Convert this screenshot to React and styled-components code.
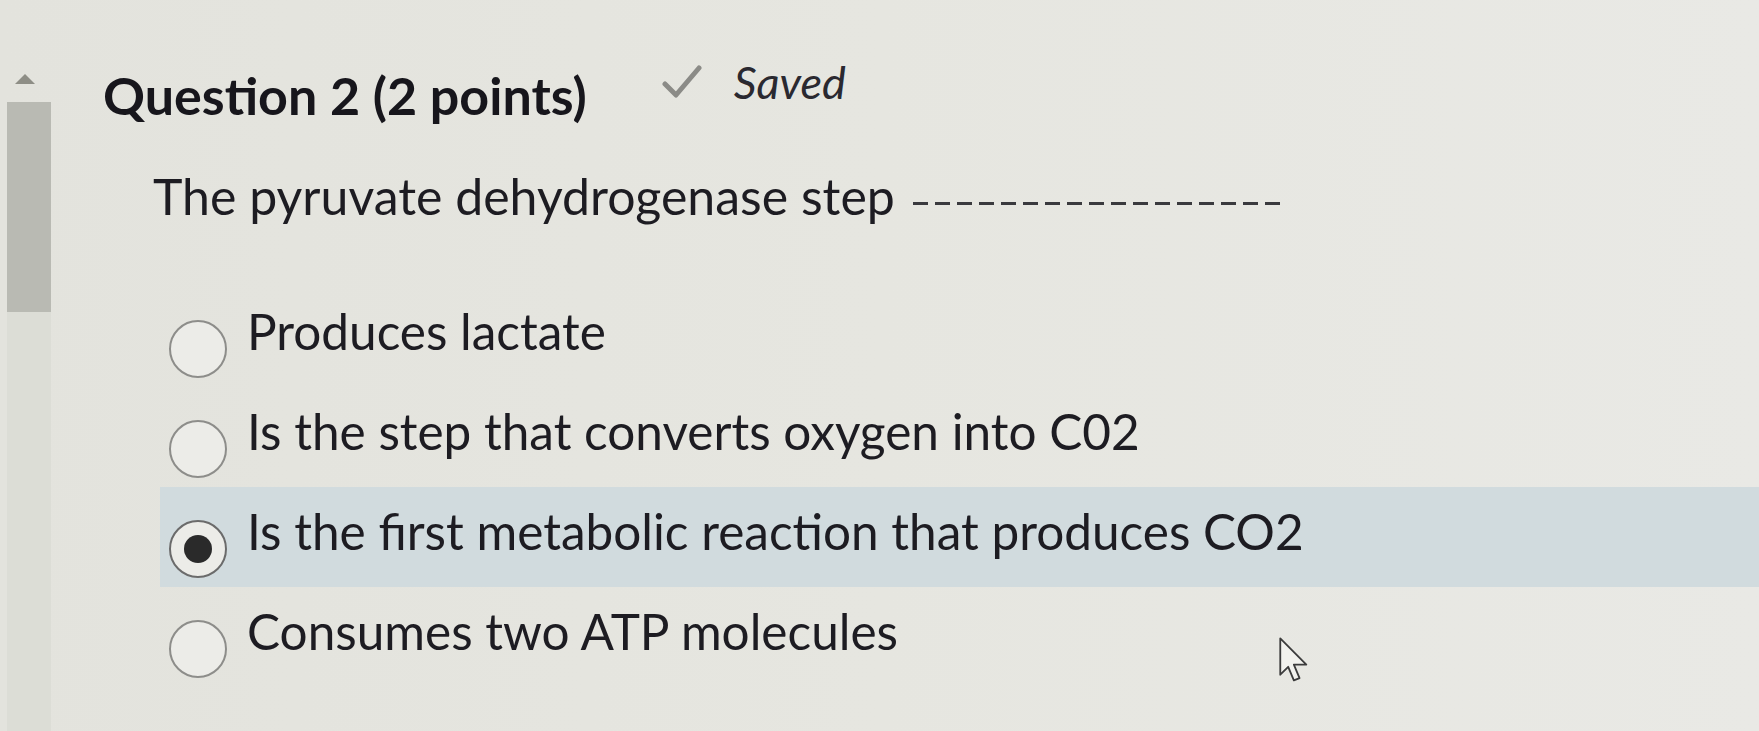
import React from "react";
import styled, { createGlobalStyle } from "styled-components";

const Global = createGlobalStyle`
  html, body { margin: 0; padding: 0; }
  body { background: #e4e4de; font-family: Lato, "Open Sans", sans-serif; }
`;

const Page = styled.div`
  position: relative;
  display: flex;
  width: 1759px;
  height: 731px;
  overflow: hidden;
  background: linear-gradient(90deg, #e3e3dd 0%, #e6e6e0 50%, #e9e9e5 100%);
  color: #1d1c22;
`;

const Rail = styled.div`
  flex: 0 0 58px;
  display: flex;
  flex-direction: column;
  align-items: flex-start;
  padding: 74px 0 0 7px;
  box-sizing: border-box;
`;

const UpArrow = styled.div`
  width: 0;
  height: 0;
  margin-left: 8px;
  border-left: 10px solid transparent;
  border-right: 10px solid transparent;
  border-bottom: 10px solid #8e8e86;
`;

const Track = styled.div`
  flex: 1;
  margin-top: 18px;
  width: 44px;
  display: flex;
  flex-direction: column;
  background: #dcddd6;
`;

const Thumb = styled.div`
  width: 100%;
  height: 210px;
  background: #b9bab3;
`;

const Content = styled.div`
  flex: 1;
  display: flex;
  flex-direction: column;
  padding-top: 64px;
  padding-left: 45px;
`;

const HeadingRow = styled.div`
  display: flex;
  align-items: flex-start;
`;

const Title = styled.h2`
  margin: 0;
  font-family: Lato, sans-serif;
  font-weight: 700;
  font-size: 52px;
  line-height: 1.2;
  color: #17161c;
`;

const SavedGroup = styled.div`
  display: flex;
  align-items: center;
  gap: 32px;
  margin: -9px 0 0 75px;
`;

const SavedText = styled.span`
  font-family: Lato, sans-serif;
  font-style: italic;
  font-size: 45px;
  line-height: 1.2;
  color: #2a2930;
`;

const QuestionText = styled.p`
  margin: 40px 0 0 50px;
  font-family: Lato, sans-serif;
  font-size: 50px;
  line-height: 1.2;
  color: #1d1c22;
`;

const Blank = styled.span`
  display: inline-block;
  width: 372px;
  height: 3px;
  margin-left: 18px;
  margin-bottom: 10px;
  background: repeating-linear-gradient(90deg, #3a3a3e 0 15px, transparent 15px 22px);
`;

const Options = styled.div`
  margin: 61px 0 0 57px;
  display: flex;
  flex-direction: column;
`;

const Row = styled.label`
  display: flex;
  align-items: center;
  height: 100px;
  padding-left: 9px;
  background: ${(p) => (p.$selected ? "#d1dbde" : "transparent")};
  cursor: pointer;
`;

const Radio = styled.span`
  flex: 0 0 auto;
  box-sizing: border-box;
  width: 58px;
  height: 58px;
  margin-top: 24px;
  border-radius: 50%;
  border: 2px solid ${(p) => (p.$checked ? "#6b6b6b" : "#8d8d8a")};
  background: #ecece8;
  display: flex;
  align-items: center;
  justify-content: center;
`;

const Dot = styled.span`
  width: 28px;
  height: 28px;
  border-radius: 50%;
  background: #2a2a2a;
`;

const OptionLabel = styled.span`
  margin-left: 20px;
  padding-bottom: 12px;
  font-family: Lato, sans-serif;
  font-size: 49.5px;
  line-height: 1.2;
  color: #1d1c22;
`;

const Cursor = styled.svg`
  position: absolute;
  left: 1278px;
  top: 636px;
`;

const options = [
  "Produces lactate",
  "Is the step that converts oxygen into C02",
  "Is the first metabolic reaction that produces CO2",
  "Consumes two ATP molecules",
];

export default function App() {
  const selected = 2;
  return (
    <>
      <Global />
      <Page>
        <Rail>
          <UpArrow />
          <Track>
            <Thumb />
          </Track>
        </Rail>
        <Content>
          <HeadingRow>
            <Title>Question 2 (2 points)</Title>
            <SavedGroup>
              <svg width="40" height="34" viewBox="0 0 40 34">
                <path d="M3 19 L14 30 L37 3" fill="none" stroke="#8b8b87" strokeWidth="5" strokeLinecap="round" strokeLinejoin="round" />
              </svg>
              <SavedText>Saved</SavedText>
            </SavedGroup>
          </HeadingRow>
          <QuestionText>
            The pyruvate dehydrogenase step
            <Blank />
          </QuestionText>
          <Options>
            {options.map((o, i) => (
              <Row key={i} $selected={i === selected}>
                <Radio $checked={i === selected}>{i === selected && <Dot />}</Radio>
                <OptionLabel>{o}</OptionLabel>
              </Row>
            ))}
          </Options>
        </Content>
        <Cursor width="34" height="48" viewBox="0 0 30 42">
          <path d="M2 2 L2 34 L9 27 L14 39 L19 37 L14 25 L25 25 Z" fill="#f2f2ee" stroke="#3c3c3c" strokeWidth="1.6" strokeLinejoin="round" />
        </Cursor>
      </Page>
    </>
  );
}
